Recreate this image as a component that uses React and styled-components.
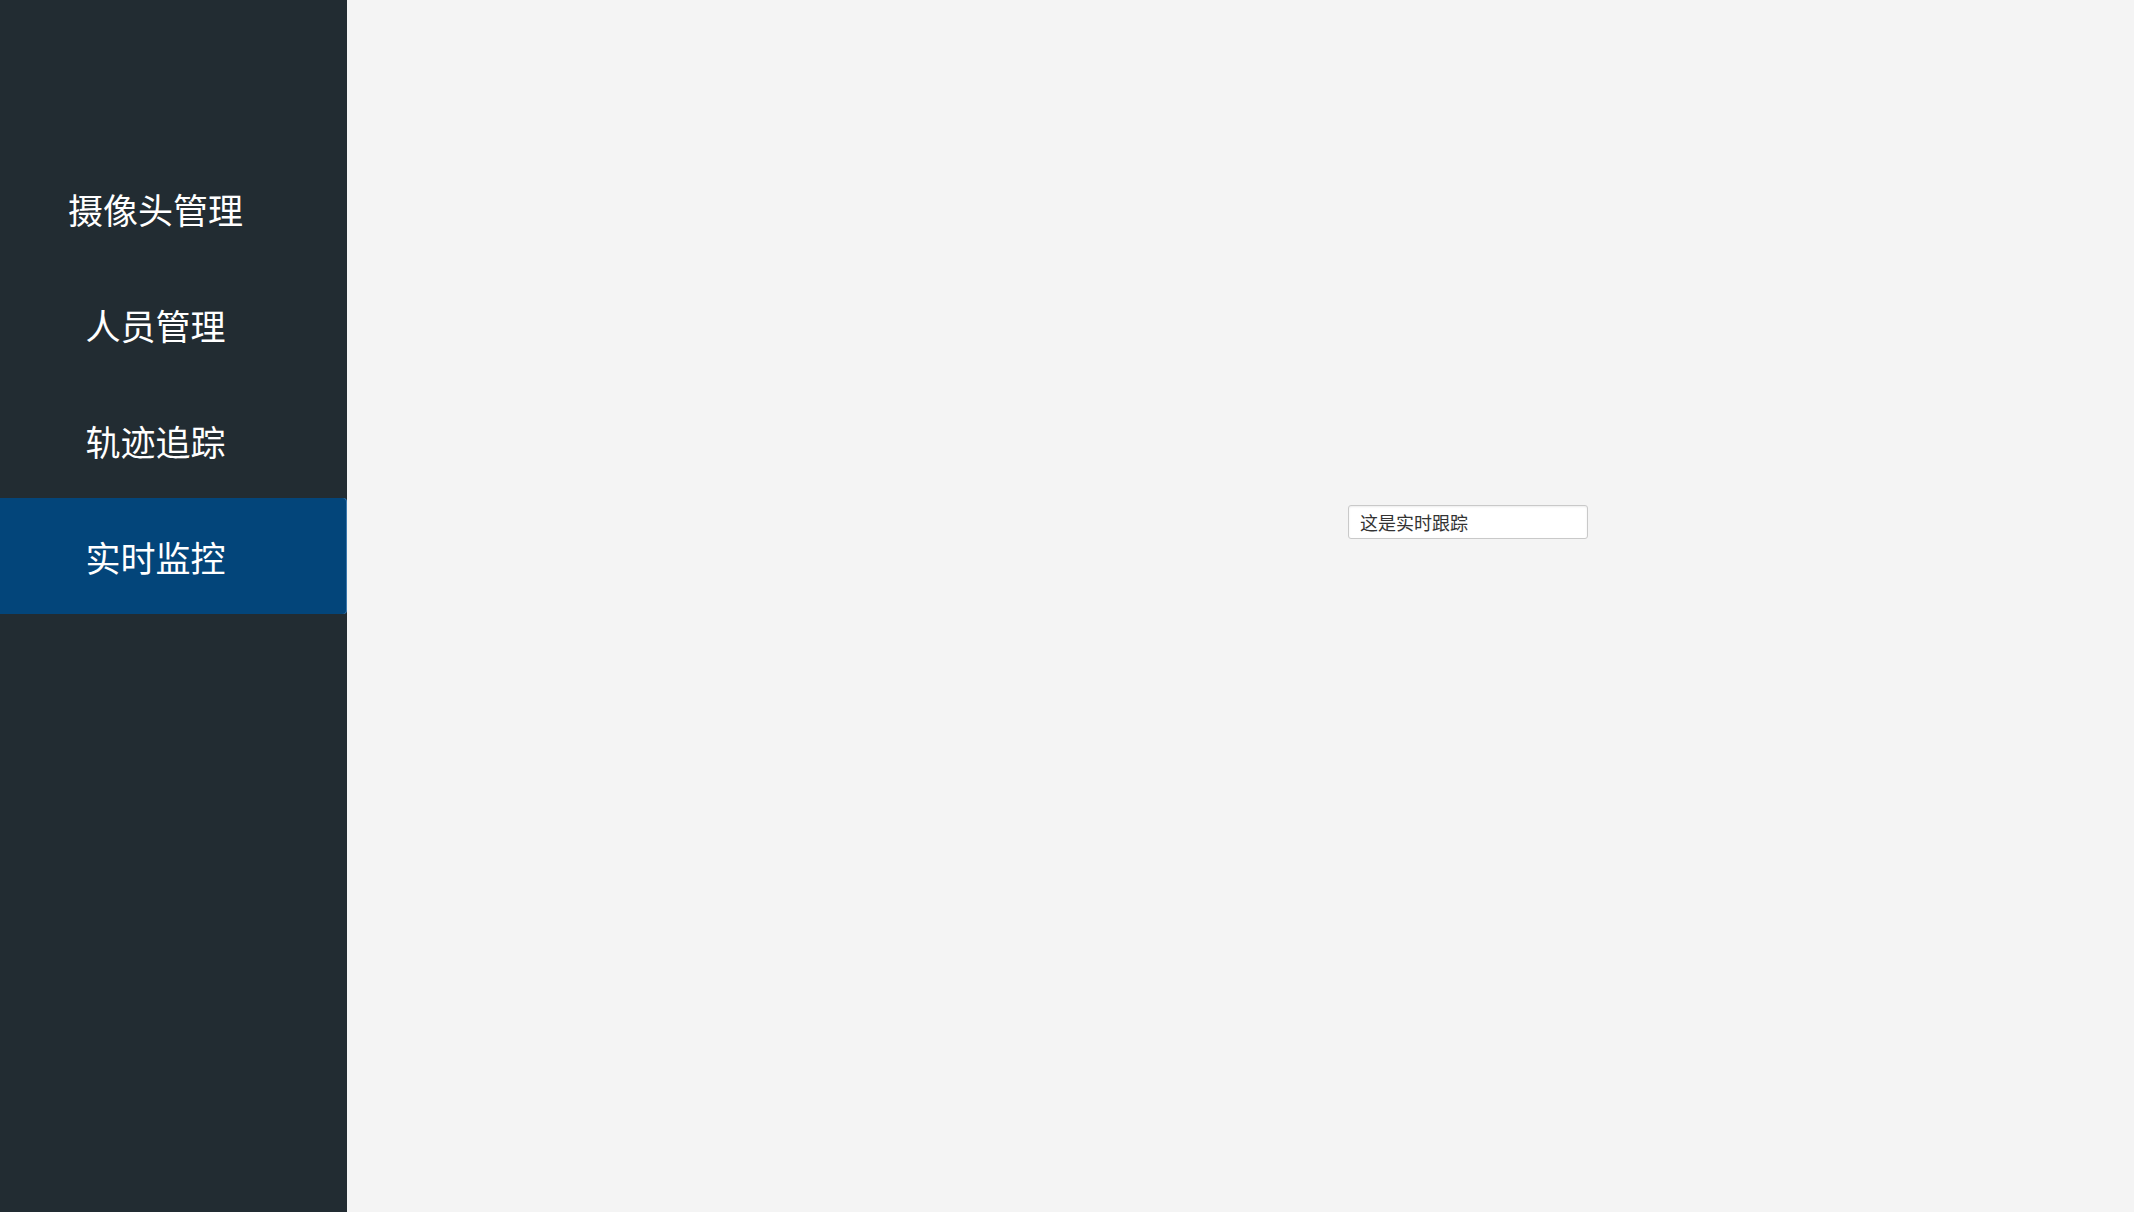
import React, { useState } from "react";
import styled, { createGlobalStyle } from "styled-components";

const GlobalStyle = createGlobalStyle`
  html, body { margin: 0; padding: 0; height: 100%; }
  body {
    font-family: "Noto Sans CJK SC", "Noto Sans", sans-serif;
    background: #f4f4f4;
  }
  #root { height: 100%; }
`;

const Layout = styled.div`
  display: flex;
  width: 100%;
  height: 1212px;
`;

const Sidebar = styled.nav`
  width: 347px;
  flex: none;
  background: #222c32;
  padding-top: 150px;
  box-sizing: border-box;
`;

const MenuList = styled.ul`
  list-style: none;
  margin: 0;
  padding: 0;
  display: flex;
  flex-direction: column;
`;

const MenuItem = styled.li`
  height: 116px;
  display: flex;
  align-items: center;
  justify-content: center;
  padding-right: 36px;
  box-sizing: border-box;
  color: #ffffff;
  font-size: 35px;
  font-weight: 400;
  cursor: pointer;
  background: ${(p) => (p.$active ? "#03457a" : "transparent")};
  border-radius: ${(p) => (p.$active ? "0 4px 4px 0" : "0")};
  box-shadow: ${(p) => (p.$active ? "inset -1px 0 0 #3a78ad" : "none")};
`;

const Main = styled.main`
  flex: 1;
  background: #f4f4f4;
  padding: 505px 0 0 1001px;
  box-sizing: border-box;
`;

const TextField = styled.input`
  width: 240px;
  height: 34px;
  box-sizing: border-box;
  border: 1px solid #c9c9c9;
  border-radius: 3px;
  background: #ffffff;
  box-shadow: inset 0 1px 2px rgba(0, 0, 0, 0.08);
  padding: 0 11px;
  font-family: "Noto Sans CJK SC", "Noto Sans", sans-serif;
  font-size: 18px;
  color: #333333;
  outline: none;
`;

const items = ["摄像头管理", "人员管理", "轨迹追踪", "实时监控"];

export default function App() {
  const [active, setActive] = useState(3);
  return (
    <>
      <GlobalStyle />
      <Layout>
        <Sidebar>
          <MenuList>
            {items.map((t, i) => (
              <MenuItem key={t} $active={i === active} onClick={() => setActive(i)}>
                {t}
              </MenuItem>
            ))}
          </MenuList>
        </Sidebar>
        <Main>
          <TextField type="text" defaultValue="这是实时跟踪" />
        </Main>
      </Layout>
    </>
  );
}
